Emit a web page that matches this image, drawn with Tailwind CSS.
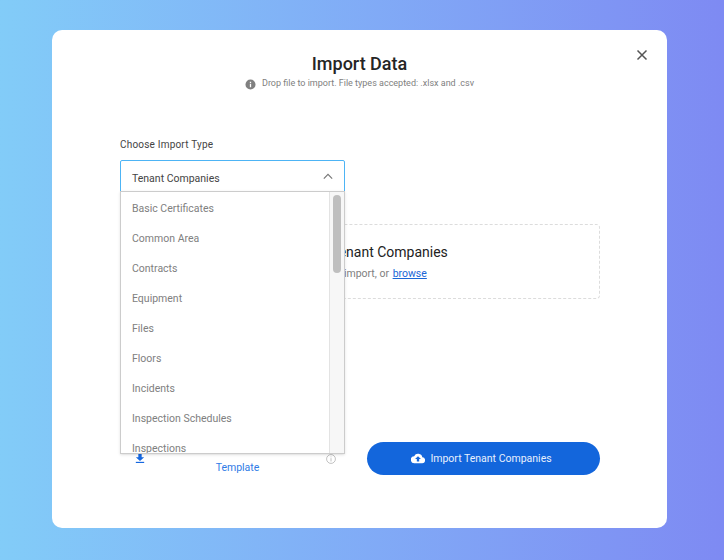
<!DOCTYPE html>
<html>
<head>
<meta charset="utf-8">
<title>Import Data</title>
<script src="https://cdn.jsdelivr.net/npm/@tailwindcss/browser@4"></script>
</head>
<body class="w-[724px] h-[560px] overflow-hidden font-['Roboto',sans-serif]">
  <div class="w-full h-full pt-[30px] pl-[52px] bg-gradient-to-r from-[#82ccf8] to-[#7e8af3]">
    <!-- Modal -->
    <div class="relative w-[615px] h-[498px] bg-white rounded-[10px] pt-[22px] px-[68px]">
      <button class="absolute top-[19px] right-[19px] w-3 h-3 text-[#555]">
        <svg viewBox="0 0 12 12" class="w-3 h-3" fill="none" stroke="currentColor" stroke-width="1.5"><path d="M1.5 1.5l9 9M10.5 1.5l-9 9"/></svg>
      </button>

      <!-- Header -->
      <h1 class="text-center text-[18px] leading-6 font-medium text-[#252525]">Import Data</h1>
      <div class="flex justify-center items-center gap-[6px] h-[16px] text-[9px] text-[#808080]">
        <svg viewBox="0 0 24 24" class="w-[11px] h-[11px]" fill="#808080"><path d="M12 1a11 11 0 1 0 0 22 11 11 0 0 0 0-22zm1.4 17h-2.8v-7.5h2.8V18zm0-9.5h-2.8V6h2.8v2.5z"/></svg>
        <span>Drop file to import. File types accepted: .xlsx and .csv</span>
      </div>

      <!-- Import type -->
      <p class="mt-[46px] text-[10px] leading-[14px] tracking-[0.2px] text-[#444]">Choose Import Type</p>
      <div class="relative mt-[8px] w-[225px]">
        <div class="flex items-center justify-between h-[32px] pl-[11px] pr-[11px] border border-[#4db4f5] rounded-t-[2px] text-[10.5px] text-[#444]">
          <span class="pt-[5px]">Tenant Companies</span>
          <svg viewBox="0 0 12 8" class="w-[10px] h-[7px]" fill="none" stroke="#777" stroke-width="1.4"><path d="M1 6.5l5-5 5 5"/></svg>
        </div>

        <!-- Open list -->
        <div class="absolute z-10 top-[31px] left-0 w-[225px] h-[263px] bg-white border border-[#ccc] shadow-sm overflow-hidden flex">
          <ul class="flex-1 pl-[11px] pt-[1px] text-[10.5px] text-[#808080]">
            <li class="h-[30px] leading-[30px] mt-[1px]">Basic Certificates</li>
            <li class="h-[30px] leading-[30px]">Common Area</li>
            <li class="h-[30px] leading-[30px]">Contracts</li>
            <li class="h-[30px] leading-[30px]">Equipment</li>
            <li class="h-[30px] leading-[30px]">Files</li>
            <li class="h-[30px] leading-[30px]">Floors</li>
            <li class="h-[30px] leading-[30px]">Incidents</li>
            <li class="h-[30px] leading-[30px]">Inspection Schedules</li>
            <li class="h-[30px] leading-[30px]">Inspections</li>
          </ul>
          <div class="w-[15px] h-full bg-[#f7f7f7] border-l border-[#e3e3e3] pt-[3px] pl-[3px]">
            <div class="w-[8px] h-[78px] rounded-full bg-[#bfbfbf]"></div>
          </div>
        </div>
      </div>

      <!-- Drop zone -->
      <div class="mt-[32px] w-[480px] h-[75px] border border-dashed border-[#dcdcdc] rounded-[4px] flex flex-col items-center pt-[17px] pl-[14px]">
        <p class="text-[14px] leading-[20px] text-[#222]">Import Tenant Companies</p>
        <p class="mt-[4px] text-[10.5px] leading-[16px] text-[#808080]">Drop to import, or <a class="ml-[1px] text-[#1a66d6] underline">browse</a></p>
      </div>

      <!-- Footer row -->
      <div class="flex mt-[143px] w-[480px] justify-between">
        <div class="relative w-[218px] pt-[7px]">
          <div class="flex items-start pl-[15px] text-[10.5px] leading-[19px] text-[#2f7be6]">
            <svg viewBox="0 0 12 12" class="w-[10px] h-[11px] mt-[4px] shrink-0" fill="#1668e0"><path d="M4 0h4v4.5h3L6 9 1 4.5h3z"/><rect x="1" y="10" width="10" height="1.4"/></svg>
            <span class="flex-1 -mt-[10px] text-center pr-[8px]">Download Tenant Companies<br>Template</span>
          </div>
          <svg viewBox="0 0 12 12" class="absolute top-[12px] right-[2px] w-[10px] h-[10px]" fill="none" stroke="#a5a5a5" stroke-width="0.8"><circle cx="6" cy="6" r="5.3"/><path d="M6 5v4M6 3v1"/></svg>
        </div>
        <button class="w-[233px] h-[33px] rounded-full bg-[#1366dc] flex items-center justify-center gap-[5px] pr-[4px] text-[10.5px] text-[#e8f0fd]">
          <svg viewBox="0 0 24 18" class="w-[14px] h-[11px]" fill="#fff"><path d="M19.4 7A7.5 7.5 0 0 0 5.4 5 6 6 0 0 0 6 17h13a5 5 0 0 0 .4-10zM14 10v4h-4v-4H7l5-5 5 5h-3z"/></svg>
          <span>Import Tenant Companies</span>
        </button>
      </div>
    </div>
  </div>
</body>
</html>
